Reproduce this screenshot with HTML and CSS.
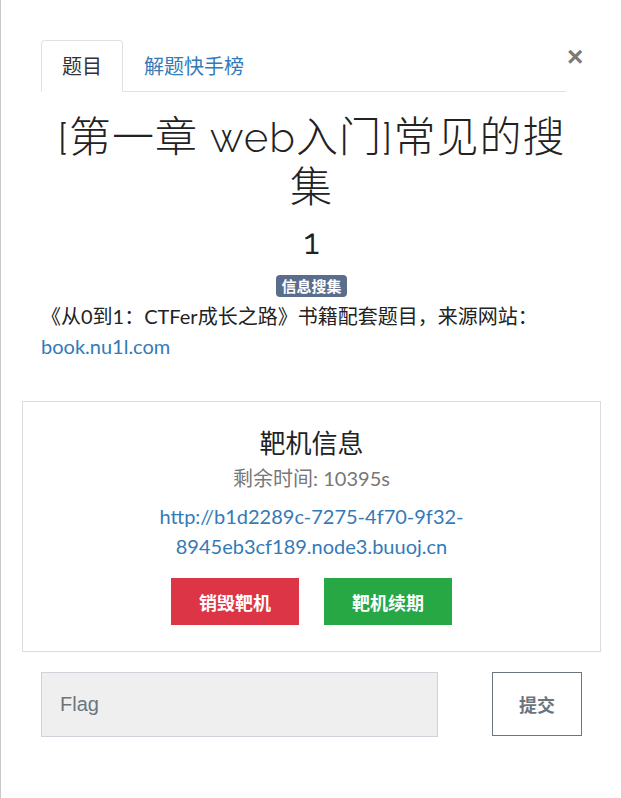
FILE: index.html
```html
<!DOCTYPE html>
<html lang="zh-CN">
<head>
<meta charset="utf-8">
<title>题目</title>
<link rel="stylesheet" href="styles.css">
</head>
<body>
<div class="modal">
  <div class="header">
    <ul class="tabs">
      <li class="tab active">题目</li>
      <li class="tab"><a href="#">解题快手榜</a></li>
    </ul>
    <span class="close">×</span>
  </div>
  <div class="content">
    <h2 class="title">[第一章 web入门]常见的搜集</h2>
    <h3 class="value">1</h3>
    <div class="tags"><span class="badge">信息搜集</span></div>
    <p class="desc">《从0到1：CTFer成长之路》书籍配套题目，来源网站：<a href="#">book.nu1l.com</a></p>
    <div class="card">
      <h4 class="card-title">靶机信息</h4>
      <div class="remain">剩余时间: 10395s</div>
      <a class="target" href="#">http://b1d2289c-7275-4f70-9f32-8945eb3cf189.node3.buuoj.cn</a>
      <div class="actions">
        <button class="btn btn-red">销毁靶机</button>
        <button class="btn btn-green">靶机续期</button>
      </div>
    </div>
    <div class="submit-row">
      <input class="flag" type="text" placeholder="Flag">
      <button class="submit">提交</button>
    </div>
  </div>
</div>
</body>
</html>
```

FILE: styles.css
```css
html, body {
  margin: 0;
  padding: 0;
  background: #fff;
}
body {
  font-family: "Lato", "Noto Sans CJK SC", sans-serif;
  color: #222;
}
a {
  color: #337ab7;
  text-decoration: none;
}
.modal {
  border-left: 1px solid #c8c8c8;
  min-height: 798px;
  box-sizing: border-box;
  padding: 40px 0 0 40px;
}
.header {
  display: flex;
  align-items: flex-start;
}
.tabs {
  list-style: none;
  margin: 0;
  padding: 0;
  display: flex;
  width: 525px;
  border-bottom: 1px solid #dee2e6;
}
.tab {
  font-family: "Lato", "Noto Sans CJK SC", sans-serif;
  font-size: 20px;
  line-height: 50px;
  padding: 0 20px;
  border: 1px solid transparent;
  border-radius: 4px 4px 0 0;
  margin-bottom: -1px;
  color: #333;
}
.tab.active {
  border-color: #dee2e6 #dee2e6 #fff;
  background: #fff;
}
.close {
  font-family: "Liberation Sans", sans-serif;
  font-size: 28px;
  font-weight: bold;
  line-height: 1;
  color: #7a7a7a;
  margin: 3px 0 0 1px;
}
.content {
  width: 541px;
}
.title {
  margin: 21px 0 0;
  text-align: center;
  font-family: "Raleway", "Lato", "Noto Sans CJK SC", sans-serif;
  font-weight: 300;
  font-size: 42px;
  letter-spacing: 1px;
  line-height: 50px;
  color: #222;
}
.value {
  margin: 7px 0 0;
  text-align: center;
  font-family: "Raleway", "Lato", sans-serif;
  font-weight: 400;
  font-size: 36px;
  line-height: 42px;
  color: #222;
}
.tags {
  text-align: center;
  margin-top: 13px;
  line-height: 22px;
  height: 22px;
}
.badge {
  display: inline-block;
  background: #5a6d8c;
  color: #fff;
  font-family: "Noto Sans CJK SC", sans-serif;
  font-weight: bold;
  font-size: 15px;
  line-height: 22px;
  padding: 0 5px;
  border-radius: 4px;
}
.desc {
  margin: 4px 0 0;
  font-size: 20px;
  line-height: 30px;
  color: #222;
}
.card {
  margin: 40px -19px 0;
  box-sizing: border-box;
  border: 1px solid #dcdcdc;
  padding: 26px 0 26px;
  text-align: center;
}
.card-title {
  margin: 0;
  font-weight: normal;
  font-size: 26px;
  line-height: 30px;
  color: #222;
}
.remain {
  margin-top: 5px;
  font-size: 20px;
  line-height: 30px;
  color: #777;
}
.target {
  display: block;
  margin: 8px auto 0;
  width: 330px;
  font-size: 20px;
  line-height: 30px;
}
.actions {
  display: flex;
  justify-content: center;
  gap: 25px;
  margin-top: 17px;
}
.btn {
  border: none;
  width: 128px;
  height: 47px;
  color: #fff;
  font-family: "Noto Sans CJK SC", sans-serif;
  font-weight: bold;
  font-size: 18px;
  padding: 0;
}
.btn-red {
  background: #dc3545;
}
.btn-green {
  background: #28a745;
}
.submit-row {
  display: flex;
  align-items: flex-start;
  justify-content: space-between;
  margin-top: 20px;
}
.flag {
  flex-shrink: 0;
  width: 397px;
  height: 65px;
  box-sizing: border-box;
  background: #efefef;
  border: 1px solid #cdd3d9;
  padding: 0 18px;
  font-family: "Liberation Sans", sans-serif;
  font-size: 20px;
  color: #333;
  outline: none;
}
.flag::placeholder {
  color: #6c757d;
}
.submit {
  flex-shrink: 0;
  width: 90px;
  height: 64px;
  box-sizing: border-box;
  background: #fff;
  border: 1px solid #6c757d;
  color: #6c757d;
  font-family: "Noto Sans CJK SC", sans-serif;
  font-weight: bold;
  font-size: 18px;
  padding: 0;
}
```
